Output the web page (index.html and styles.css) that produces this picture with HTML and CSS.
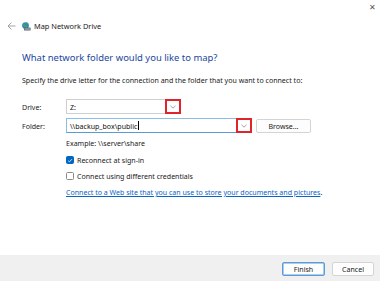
FILE: index.html
```html
<!DOCTYPE html>
<html>
<head>
<meta charset="utf-8">
<link rel="stylesheet" href="styles.css">
</head>
<body>
<div class="dialog">
  <div class="main">
    <div class="caption"><span class="close">&#x2715;</span></div>
    <div class="header">
      <svg class="back" width="9" height="8" viewBox="0 0 9 8"><path d="M8.5 4H1M4.5 0.5L1 4l3.5 3.5" fill="none" stroke="#9a9a9a" stroke-width="0.9"/></svg>
      <svg class="appicon" width="10" height="9" viewBox="0 0 10 9">
        <circle cx="4.5" cy="3.6" r="3.4" fill="#2f86c8"/>
        <path d="M2 1.6c1 .3 1.6 1 1.3 2-.3.8.6 1.3 1.4 1.1.8-.3 1.1.6 1.6.9M5.5 0.6c.2.8 1 1 1.7.9" fill="none" stroke="#3fae4a" stroke-width="1.3"/>
        <rect x="3" y="5.6" width="6.6" height="3" rx="0.6" fill="#5a6470"/>
        <rect x="3.6" y="6.3" width="5.4" height="1.4" fill="#9aa3ad"/>
        <circle cx="8.2" cy="7" r="0.45" fill="#4fd06a"/>
      </svg>
      <span class="title">Map Network Drive</span>
    </div>
    <div class="content">
      <h1 class="heading">What network folder would you like to map?</h1>
      <p class="intro">Specify the drive letter for the connection and the folder that you want to connect to:</p>
      <div class="row row-drive">
        <span class="label">Drive:</span>
        <div class="select drive">
          <span class="value">Z:</span>
          <span class="arrow"><svg width="6" height="4" viewBox="0 0 6 4"><path d="M0.5 0.8L3 3.2 5.5 0.8" fill="none" stroke="#8a8a8a" stroke-width="0.8"/></svg></span>
        </div>
      </div>
      <div class="row row-folder">
        <span class="label">Folder:</span>
        <div class="select folder">
          <span class="value">\\backup_box\public<span class="caret"></span></span>
          <span class="arrow"><svg width="6" height="4" viewBox="0 0 6 4"><path d="M0.5 0.8L3 3.2 5.5 0.8" fill="none" stroke="#8a8a8a" stroke-width="0.8"/></svg></span>
        </div>
        <button class="btn browse">Browse...</button>
      </div>
      <div class="sub">
        <div class="example">Example: \\server\share</div>
        <label class="check first"><span class="box checked"><svg width="7" height="7" viewBox="0 0 7 7"><path d="M1.3 3.7L2.8 5.1 5.8 1.9" fill="none" stroke="#fff" stroke-width="0.9"/></svg></span>Reconnect at sign-in</label>
        <label class="check"><span class="box"></span>Connect using different credentials</label>
        <div class="linkline"><a class="link">Connect to a Web site that you can use to store your documents and pictures</a>.</div>
      </div>
    </div>
  </div>
  <div class="footer">
    <button class="btn finish">Finish</button>
    <button class="btn cancel">Cancel</button>
  </div>
</div>
</body>
</html>
```
FILE: styles.css
```css
* { box-sizing: border-box; }
html, body { margin: 0; padding: 0; background: #ffffff; }
body {
  font-family: "Noto Sans", "Open Sans", "Liberation Sans", sans-serif;
  color: #1a1a1a;
  font-size: 7.05px;
}
.dialog { width: 380px; height: 281px; display: flex; flex-direction: column; }
.main { height: 255px; display: flex; flex-direction: column; }
.caption { height: 18px; display: flex; justify-content: flex-end; align-items: flex-start; }
.close { font-size: 8px; color: #555; line-height: 14px; width: 16px; text-align: center; }
.header { height: 16px; display: flex; align-items: center; padding-left: 7px; }
.back { margin-right: 5px; }
.appicon { margin-right: 3px; }
.title { font-size: 7.4px; color: #222; }
.content { padding-left: 22px; display: flex; flex-direction: column; }
.heading {
  margin: 16px 0 0 0; font-weight: normal; font-size: 9.45px; line-height: 16px;
  color: #1c47a0;
}
.intro { margin: 8px 0 0 0; line-height: 12px; }
.row { display: flex; align-items: center; }
.row-drive { margin-top: 13px; }
.row-folder { margin-top: 4px; }
.label { width: 44px; }
.select {
  height: 15px; display: flex; align-items: stretch;
  border: 1px solid #cfcfcf; background: #fff;
}
.drive { width: 115px; }
.folder { width: 186px; border-color: #8bbde6; border-bottom: 1px solid #5b9bd5; }
.value { flex: 1; padding-left: 3px; display: flex; align-items: center; color: #111; }
.caret { display: inline-block; width: 0.7px; height: 9px; background: #000; margin-left: 0.5px; }
.arrow {
  width: 16px; display: flex; align-items: center; justify-content: center;
  border: 2px solid #e0242b; margin: -1px -1px -1px 0;
}
.btn {
  font-family: inherit; font-size: 7.05px; color: #1a1a1a;
  background: #fdfdfd; border: 1px solid #d4d4d4; border-radius: 2px;
  padding: 0; height: 14px;
}
.browse { width: 55px; margin-left: 4px; }
.sub { padding-left: 44px; display: flex; flex-direction: column; }
.example { margin-top: 4px; line-height: 12px; }
.check { display: flex; align-items: center; line-height: 12px; margin-top: 4px; }
.check.first { margin-top: 5px; }
.box {
  width: 8px; height: 8px; border: 1px solid #8a8a8a; border-radius: 1.5px;
  margin-right: 3px; display: flex; align-items: center; justify-content: center; background: #fff;
}
.box.checked { background: #0067c0; border-color: #0067c0; }
.linkline { margin-top: 4px; line-height: 12px; }
.link { color: #0a64c8; text-decoration: underline; }
.footer {
  height: 26px; background: #f0f0f0; display: flex; align-items: center;
  justify-content: flex-end; padding-right: 6px; gap: 7px; padding-top: 1px;
}
.finish { width: 43px; border-color: #5a9bd8; box-shadow: inset 0 0 0 0.5px #5a9bd8; }
.cancel { width: 42px; }
```
